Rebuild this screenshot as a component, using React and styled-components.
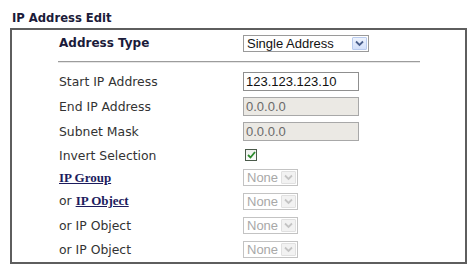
import React from "react"
import styled, { createGlobalStyle } from "styled-components"

const GlobalStyle = createGlobalStyle`
  body {
    margin: 0;
    background: #fff;
    font-family: "DejaVu Sans", Verdana, sans-serif;
  }
`

const Page = styled.div`
  width: 473px;
  height: 267px;
  padding: 10px 0 0 10px;
  box-sizing: border-box;
`

const Title = styled.div`
  font-size: 11.6px;
  font-weight: bold;
  color: #1b1b3a;
  padding-left: 2px;
  height: 18px;
  line-height: 16px;
`

const Box = styled.div`
  width: 457px;
  height: 236px;
  box-sizing: border-box;
  border: 2px solid #5e5e5e;
  padding-top: 1px;
`

const Row = styled.div`
  display: grid;
  grid-template-columns: 184px 1fr;
  align-items: center;
  height: ${(p) => p.$h}px;
  padding-left: 47px;
`

const Label = styled.div`
  font-size: ${(p) => (p.$strong ? "12px" : "12.4px")};
  color: ${(p) => (p.$strong ? "#1b1b3a" : "#333")};
  font-weight: ${(p) => (p.$strong ? "bold" : "normal")};
  white-space: nowrap;
`

const Link = styled.a`
  font-family: "Liberation Serif", "Times New Roman", serif;
  font-weight: bold;
  font-size: 13px;
  color: #1c1c5e;
  text-decoration: underline;
`

const Divider = styled.div`
  height: 13px;
  margin-left: 46px;
  width: 362px;
  display: flex;
  align-items: center;
  &::after {
    content: "";
    display: block;
    width: 100%;
    border-top: 1px solid #9c9c9c;
    border-bottom: 1px solid #e6e6e6;
  }
`

const Input = styled.div`
  width: 116px;
  height: 19px;
  box-sizing: border-box;
  border: 1px solid ${(p) => (p.$disabled ? "#a8a8a8" : "#8f8f8f")};
  background: ${(p) => (p.$disabled ? "#ebe9e4" : "#fff")};
  color: ${(p) => (p.$disabled ? "#6a6a6a" : "#111")};
  font-family: "Liberation Sans", Arial, sans-serif;
  font-size: 13px;
  line-height: 17px;
  padding-left: 2px;
`

const Select = styled.div`
  width: ${(p) => p.$w}px;
  height: 17px;
  box-sizing: border-box;
  border: 1px solid ${(p) => (p.$disabled ? "#c3c3c3" : "#9a9a9a")};
  display: flex;
  align-items: center;
  justify-content: space-between;
  background: #fff;
  font-family: "Liberation Sans", Arial, sans-serif;
  font-size: 13px;
  color: ${(p) => (p.$disabled ? "#a8a8a8" : "#111")};
  padding-left: 3px;
  padding-right: 1px;
`

const Arrow = styled.span`
  width: 15px;
  height: 13px;
  box-sizing: border-box;
  display: flex;
  align-items: center;
  justify-content: center;
  border: 1px solid ${(p) => (p.$disabled ? "#e0e0e0" : "#b9cbee")};
  background: ${(p) =>
    p.$disabled ? "#f2f2f2" : "linear-gradient(#eef3fd, #d3e0fa)"};
  border-radius: 1px;
`

const Check = styled.div`
  width: 12px;
  height: 12px;
  box-sizing: border-box;
  margin-left: 2px;
  border: 1px solid #4a5a4a;
  background: linear-gradient(#eef0ee, #fbfbfb);
  display: flex;
  align-items: center;
  justify-content: center;
`

const Chevron = ({ disabled }) => (
  <svg width="9" height="7" viewBox="0 0 9 7">
    <path
      d="M1 1.5 L4.5 5 L8 1.5"
      fill="none"
      stroke={disabled ? "#c4c4c4" : "#4a5f8c"}
      strokeWidth="1.8"
    />
  </svg>
)

const NoneSelect = () => (
  <Select $w={55} $disabled>
    None
    <Arrow $disabled>
      <Chevron disabled />
    </Arrow>
  </Select>
)

export default function App() {
  return (
    <Page>
      <GlobalStyle />
      <Title>IP Address Edit</Title>
      <Box>
        <Row $h={24}>
          <Label $strong>Address Type</Label>
          <Select $w={126}>
            Single Address
            <Arrow>
              <Chevron />
            </Arrow>
          </Select>
        </Row>
        <Divider />
        <Row $h={26}>
          <Label>Start IP Address</Label>
          <Input>123.123.123.10</Input>
        </Row>
        <Row $h={25}>
          <Label>End IP Address</Label>
          <Input $disabled>0.0.0.0</Input>
        </Row>
        <Row $h={25}>
          <Label>Subnet Mask</Label>
          <Input $disabled>0.0.0.0</Input>
        </Row>
        <Row $h={22}>
          <Label>Invert Selection</Label>
          <Check>
            <svg width="9" height="8" viewBox="0 0 9 8">
              <path d="M1 4 L3.5 6.5 L8 1" fill="none" stroke="#2c8a2c" strokeWidth="1.8" />
            </svg>
          </Check>
        </Row>
        <Row $h={23}>
          <Label>
            <Link>IP Group</Link>
          </Label>
          <NoneSelect />
        </Row>
        <Row $h={24}>
          <Label>
            or <Link>IP Object</Link>
          </Label>
          <NoneSelect />
        </Row>
        <Row $h={24}>
          <Label>or IP Object</Label>
          <NoneSelect />
        </Row>
        <Row $h={24}>
          <Label>or IP Object</Label>
          <NoneSelect />
        </Row>
      </Box>
    </Page>
  )
}
